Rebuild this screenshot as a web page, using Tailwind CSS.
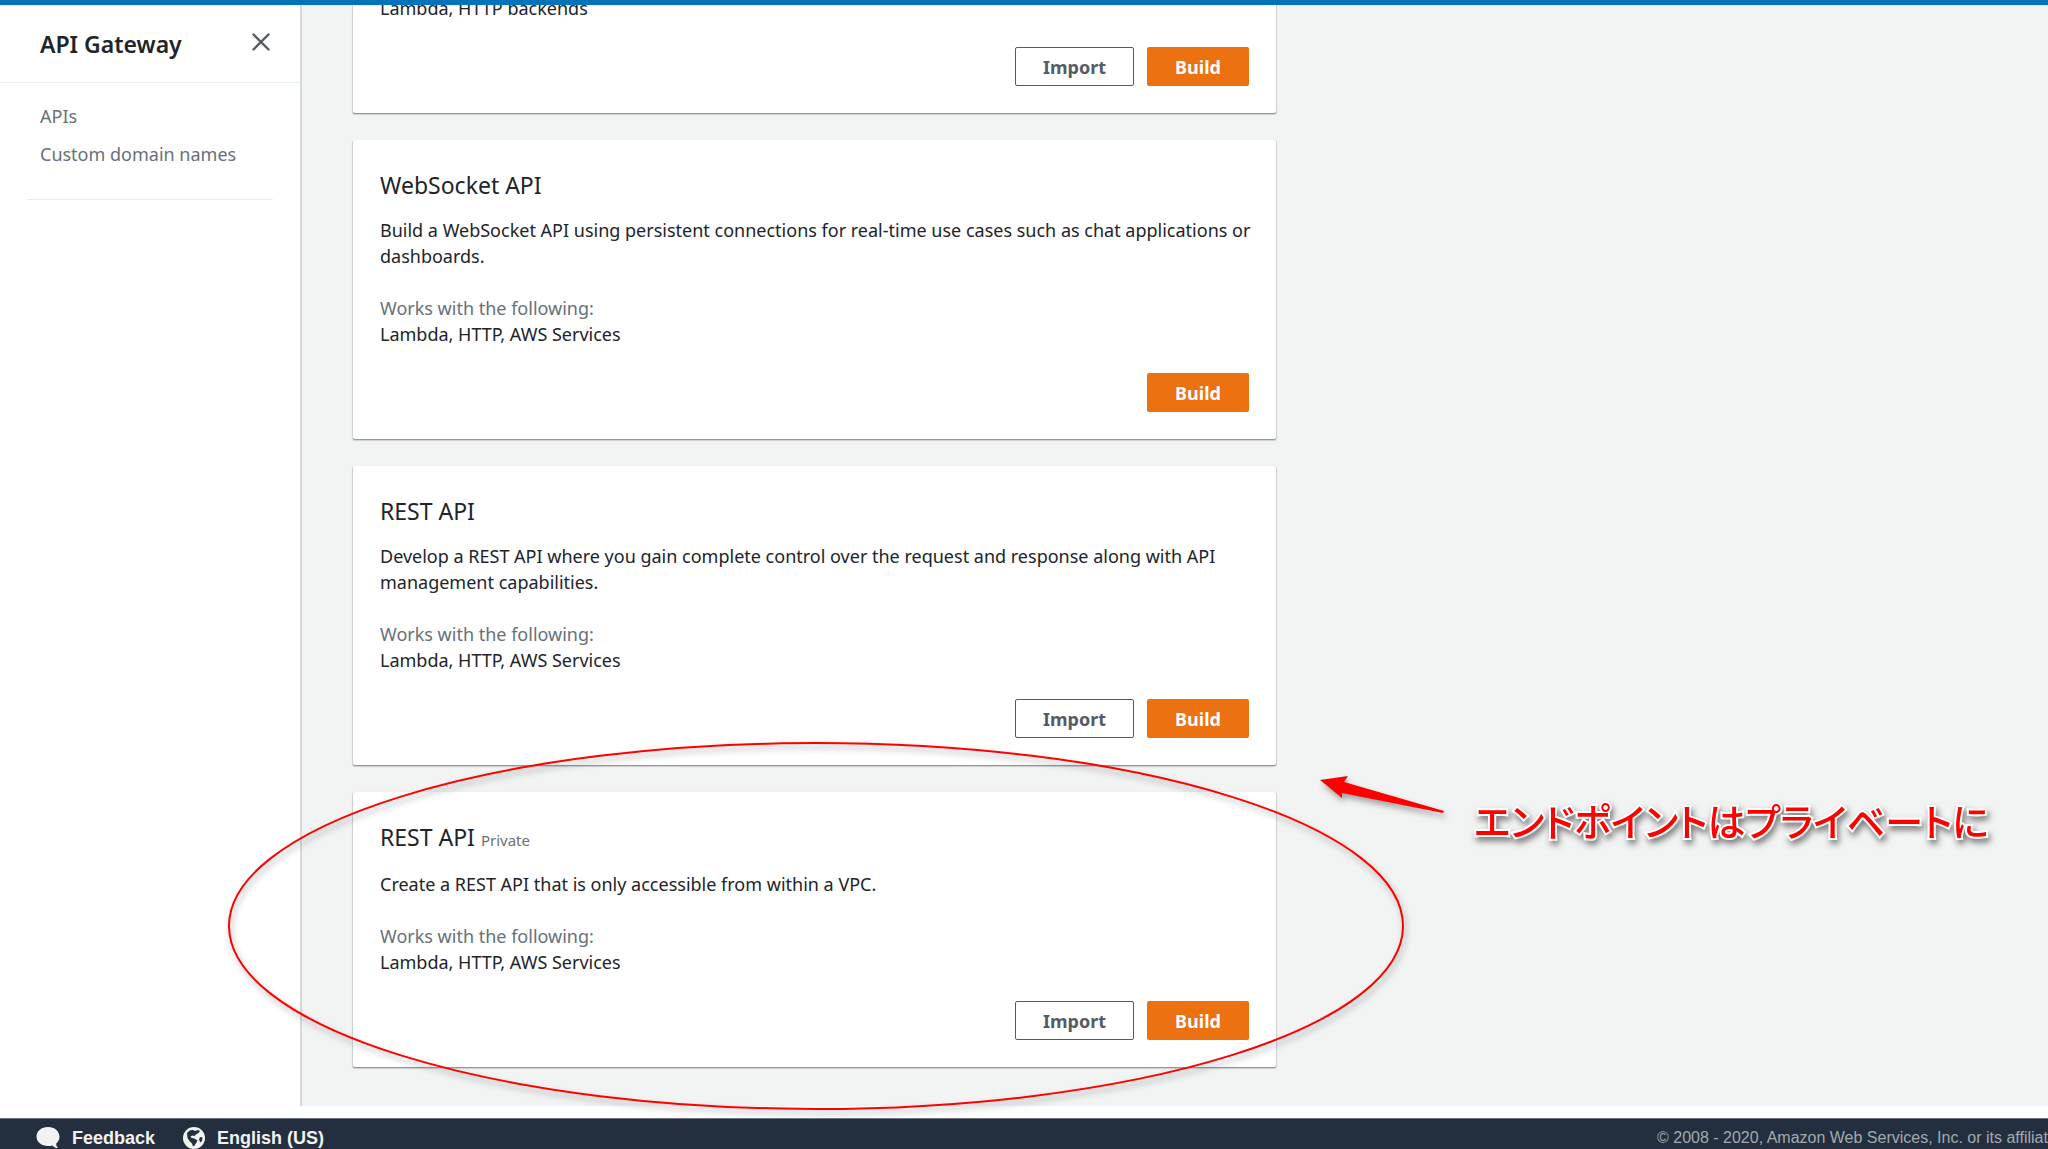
<!DOCTYPE html>
<html lang="en">
<head>
    <meta charset="UTF-8">
    <meta name="viewport" content="width=device-width, initial-scale=1.0">
    <title>API Gateway</title>
    <script src="https://cdn.jsdelivr.net/npm/@tailwindcss/browser@4"></script>
</head>
<body class="bg-white font-['Noto_Sans','Open_Sans',sans-serif] text-[#212429]">
    <div class="flex h-screen flex-col overflow-hidden">
        <div class="h-[5px] shrink-0 bg-[#0073bb]"></div>

        <div class="flex min-h-0 flex-1 overflow-hidden pb-3">
            <!-- Sidebar -->
            <nav class="w-[302px] shrink-0 border-r-2 border-[#d5dbdb] bg-white">
                <div class="flex h-[78px] items-center justify-between border-b border-[#eaeded] pl-10 pr-[29px]">
                    <h2 class="text-[23px] leading-8 font-semibold">API Gateway</h2>
                    <button type="button" aria-label="Close" class="mb-1 text-[#545b64]">
                        <svg class="size-5" viewBox="0 0 20 20" fill="none" stroke="currentColor" stroke-width="2.4" stroke-linecap="round"><path d="M2.500 2.500l15 15M17.500 2.500l-15 15"/></svg>
                    </button>
                </div>
                <ul class="mx-[27px] border-b border-[#eaeded] pt-5 pb-8 pl-[13px] text-lg leading-[26px] text-[#687078]">
                    <li class="mb-3"><a href="#">APIs</a></li>
                    <li><a href="#">Custom domain names</a></li>
                </ul>
            </nav>

            <!-- API types, scrolled to the end -->
            <main class="flex flex-1 flex-col justify-end gap-[27px] bg-[#f2f3f3] pr-4 pb-[39px] pl-[51px] text-lg leading-[26px]">
                <section class="w-[923px] shrink-0 rounded-xs bg-white p-[27px] shadow-[0_1px_1px_#879596,0_1px_1px_1px_#0000001f]">
                    <p>Lambda, HTTP backends</p>
                    <div class="mt-[26px] flex justify-end gap-[13px]">
                        <button type="button" class="h-[39px] w-[119px] rounded-xs border border-[#545b64] font-bold text-[#545b64]">Import</button>
                        <button type="button" class="h-[39px] w-[102px] rounded-xs bg-[#ec7211] font-bold text-white">Build</button>
                    </div>
                </section>

                <section class="w-[923px] shrink-0 rounded-xs bg-white p-[27px] shadow-[0_1px_1px_#879596,0_1px_1px_1px_#0000001f]">
                    <h3 class="mb-[14px] text-[23px] leading-9">WebSocket API</h3>
                    <p class="-mr-4">Build a WebSocket API using persistent connections for real-time use cases such as chat applications or dashboards.</p>
                    <p class="mt-[26px] text-[#687078]">Works with the following:</p>
                    <p>Lambda, HTTP, AWS Services</p>
                    <div class="mt-[26px] flex justify-end gap-[13px]">
                        <button type="button" class="h-[39px] w-[102px] rounded-xs bg-[#ec7211] font-bold text-white">Build</button>
                    </div>
                </section>

                <section class="w-[923px] shrink-0 rounded-xs bg-white p-[27px] shadow-[0_1px_1px_#879596,0_1px_1px_1px_#0000001f]">
                    <h3 class="mb-[14px] text-[23px] leading-9">REST API</h3>
                    <p>Develop a REST API where you gain complete control over the request and response along with API management capabilities.</p>
                    <p class="mt-[26px] text-[#687078]">Works with the following:</p>
                    <p>Lambda, HTTP, AWS Services</p>
                    <div class="mt-[26px] flex justify-end gap-[13px]">
                        <button type="button" class="h-[39px] w-[119px] rounded-xs border border-[#545b64] font-bold text-[#545b64]">Import</button>
                        <button type="button" class="h-[39px] w-[102px] rounded-xs bg-[#ec7211] font-bold text-white">Build</button>
                    </div>
                </section>

                <section class="relative w-[923px] shrink-0 rounded-xs bg-white p-[27px] shadow-[0_1px_1px_#879596,0_1px_1px_1px_#0000001f]">
                    <h3 class="mb-4 text-[23px] leading-9">REST API <small class="text-[15px] leading-5 text-[#687078]">Private</small></h3>
                    <p>Create a REST API that is only accessible from within a VPC.</p>
                    <p class="mt-[26px] text-[#687078]">Works with the following:</p>
                    <p>Lambda, HTTP, AWS Services</p>
                    <div class="mt-[26px] flex justify-end gap-[13px]">
                        <button type="button" class="h-[39px] w-[119px] rounded-xs border border-[#545b64] font-bold text-[#545b64]">Import</button>
                        <button type="button" class="h-[39px] w-[102px] rounded-xs bg-[#ec7211] font-bold text-white">Build</button>
                    </div>

                    <!-- Callout over the card -->
                    <svg class="pointer-events-none absolute -top-[52px] -left-[127px] h-[372px] w-[1220px] overflow-visible drop-shadow-[2px_4px_3px_#00000059]" viewBox="0 0 1220 372">
                        <ellipse cx="590" cy="186" rx="587" ry="183" fill="none" stroke="#f00" stroke-width="2"/>
                        <path d="M1094 40L1122 36L1118 42L1218 71L1217 73L1116 53L1116 58Z" fill="#f00"/>
                    </svg>
                    <p lang="ja" class="absolute top-0 left-[1121px] whitespace-nowrap font-['Noto_Sans_CJK_JP',sans-serif] text-[38px] leading-[56px] font-medium text-[#f00] [font-feature-settings:'palt'] [-webkit-text-stroke:4px_white] [paint-order:stroke_fill] drop-shadow-[2px_4px_3px_#00000080]">エンドポイントはプライベートに</p>
                </section>
            </main>
        </div>

        <!-- Footer -->
        <footer class="flex h-[31px] shrink-0 items-center justify-between border-t border-[#6b7480] bg-[#232f3e] pt-[7px] pl-9 font-['Liberation_Sans',sans-serif]">
            <div class="flex items-center gap-7 text-lg leading-6 font-bold text-[#f2f2f2]">
                <a href="#" class="flex items-center gap-3">
                    <svg class="h-[22px] w-6" viewBox="0 0 24 22" fill="currentColor"><path d="M12 0C5.500 0 0.500 4 0.500 9.500S5.500 19 12 19c1.600 0 3-.2 4.300-.6 1.500 1.500 3.500 2.600 5.700 2.700-1.300-1.300-1.900-2.900-1.800-4.600 2-1.600 3.300-3.900 3.300-6.500C23.500 4 18.500 0 12 0z"/></svg>
                    Feedback
                </a>
                <a href="#" class="flex items-center gap-3">
                    <svg class="size-[22px]" viewBox="0 0 22 22"><circle cx="11" cy="11" r="11" fill="#f2f2f2"/><path d="M4 6C6 3.500 8 2.500 10 3l2 1 3-1 2 1-1.500 2-2 1-2 2-2-.5-2 1 1 1.500 3 .5 3 2-1 2-2 3-1.500 1-1-3-2.500-2.500L4.500 11z" fill="#232f3e"/><path d="M17 10l2.500.5-.5 3.500-1.500 1.500-1.500-2.500z" fill="#232f3e"/></svg>
                    English (US)
                </a>
            </div>
            <p class="w-[391px] shrink-0 overflow-hidden text-base leading-6 whitespace-nowrap text-[#a2aaaf]">© 2008 - 2020, Amazon Web Services, Inc. or its affiliates. All rights reserved.</p>
        </footer>
    </div>
</body>
</html>
